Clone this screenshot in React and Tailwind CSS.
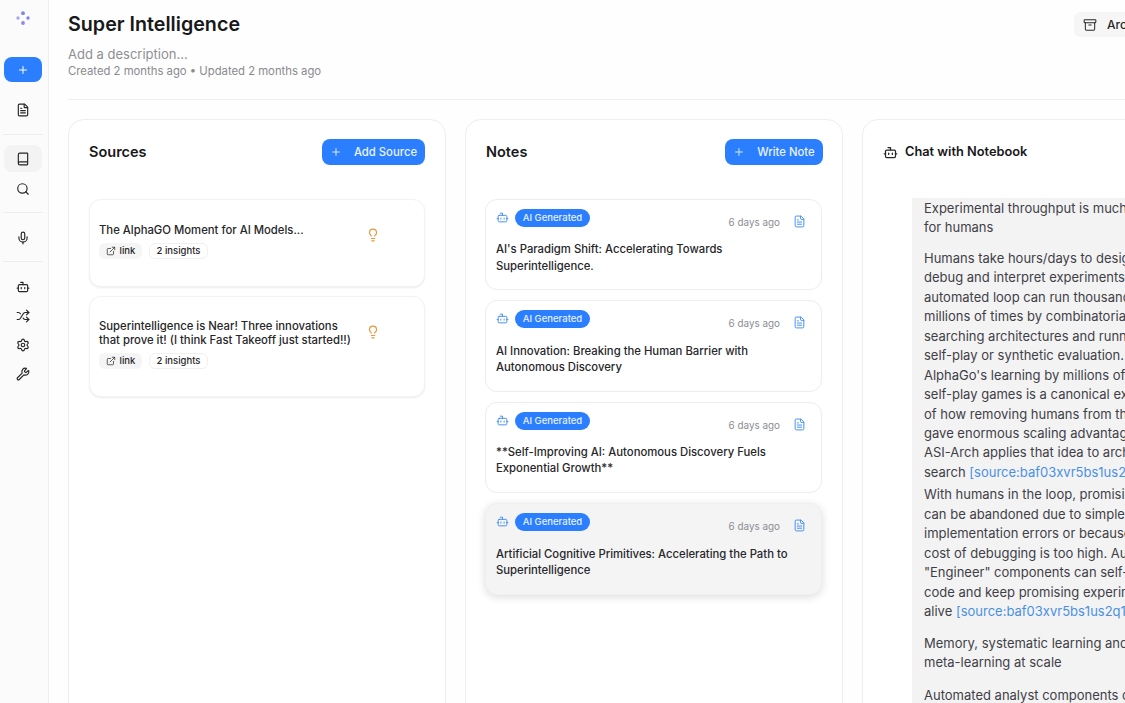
import React from "react";
import { Plus, FileText, Book, Search, Mic, Bot, Shuffle, Settings, Wrench, ExternalLink, Lightbulb, Archive } from "lucide-react";

function Logo() {
  return (
    <svg width="16" height="16" viewBox="0 0 16 16">
      <circle cx="8" cy="3.2" r="1.9" fill="#7c83ee" />
      <circle cx="3" cy="8" r="1.7" fill="#a5a9f4" />
      <circle cx="13" cy="8" r="1.7" fill="#7c83ee" />
      <circle cx="8" cy="13" r="1.9" fill="#8f87ec" />
    </svg>
  );
}

function Divider() {
  return <div className="h-px w-[40px] bg-[#eeeeee]" />;
}

function SideIcon({ icon: Icon, active }) {
  return (
    <div className={`flex w-[38px] items-center justify-center rounded-lg ${active ? "h-[27px] bg-[#f3f3f3]" : "h-[29px]"}`}>
      <Icon size={14} strokeWidth={2} className="text-[#27272a]" />
    </div>
  );
}

function Sidebar() {
  return (
    <aside className="flex h-full w-[49px] shrink-0 flex-col items-center border-r border-[#eeeeee] bg-[#fbfbfb] pr-[2px]">
      <div className="mt-[10px]"><Logo /></div>
      <button className="mt-[31px] flex h-[25px] w-[38px] items-center justify-center rounded-lg bg-[#2b7fff]">
        <Plus size={12} strokeWidth={2} className="text-white" />
      </button>
      <div className="mt-[13px]"><SideIcon icon={FileText} /></div>
      <div className="mt-[10px]"><Divider /></div>
      <div className="mt-[10px]"><SideIcon icon={Book} active /></div>
      <div className="mt-[2px]"><SideIcon icon={Search} /></div>
      <div className="mt-[9px]"><Divider /></div>
      <div className="mt-[10px]"><SideIcon icon={Mic} /></div>
      <div className="mt-[9px]"><Divider /></div>
      <div className="mt-[10px] flex flex-col">
        <SideIcon icon={Bot} />
        <SideIcon icon={Shuffle} />
        <SideIcon icon={Settings} />
        <SideIcon icon={Wrench} />
      </div>
    </aside>
  );
}

function BlueButton({ label, className }) {
  return (
    <button className={`flex h-[26px] ${className} items-center justify-center gap-[12px] rounded-lg bg-[#2b7fff] text-[11.3px] font-medium text-[#eaf2ff]`}>
      <Plus size={12} strokeWidth={1.75} />
      <span>{label}</span>
    </button>
  );
}

function SourceCard({ lines, height, pt, iconTop, mt }) {
  return (
    <div className={`relative flex ${height} w-full flex-col rounded-xl border border-[#f3f3f3] bg-white pl-[9px] ${pt} shadow-[0_1px_2px_rgba(0,0,0,0.08)]`}>
      {lines.map((l) => (
        <div key={l} className="whitespace-nowrap text-[11.3px] leading-[14px] font-medium text-[#27272a]">{l}</div>
      ))}
      <div className={`${mt} flex items-center gap-[7px]`}>
        <span className="flex h-[16px] w-[43px] items-center justify-center gap-[4px] rounded-md bg-[#f5f5f5] text-[9.5px] font-medium text-[#27272a]">
          <ExternalLink size={10} strokeWidth={1.75} />
          link
        </span>
        <span className="flex h-[16px] w-[59px] items-center justify-center rounded-md border border-[#f0f0f0] bg-white text-[9.5px] font-medium text-[#27272a]">2 insights</span>
      </div>
      <Lightbulb size={14} strokeWidth={2} className={`absolute left-[276px] ${iconTop} text-[#e8963a]`} />
    </div>
  );
}

function NoteCard({ title, hover }) {
  return (
    <div className={`h-[91.4px] w-full rounded-xl border px-[10px] pt-[9px] ${hover ? "border-[#efefef] bg-[#f4f4f5] shadow-[0_2px_8px_rgba(0,0,0,0.14)]" : "border-[#ededed] bg-white"}`}>
      <div className="flex items-start">
        <Bot size={13} strokeWidth={1.75} className="mt-[2px] text-[#3f8cf0]" />
        <span className="ml-[6px] flex h-[18px] w-[75px] items-center justify-center rounded-full bg-[#2b7fff] text-[9.5px] font-medium text-[#e6f0ff]">AI Generated</span>
        <span className="mt-[7px] ml-auto text-[9.9px] leading-[12px] text-[#8d8d93]">6 days ago</span>
        <FileText size={13} strokeWidth={1.75} className="mt-[6px] mr-[5px] ml-[13px] text-[#3f8cf0]" />
      </div>
      <div className="mt-[13.4px] text-[11.3px] leading-[16.2px] font-medium text-[#27272a]">
        {title.map((l) => <div key={l} className="whitespace-nowrap">{l}</div>)}
      </div>
    </div>
  );
}

function Panel({ children, className }) {
  return <section className={`h-[640px] shrink-0 rounded-2xl border border-[#eeeeee] bg-white ${className}`}>{children}</section>;
}

const chat = [
  { mt: "mt-[1px]", lines: ["Experimental throughput is much higher than", "for humans"] },
  {
    mt: "mt-[11px]",
    lines: [
      "Humans take hours/days to design,",
      "debug and interpret experiments; an",
      "automated loop can run thousands or",
      "millions of times by combinatorially",
      "searching architectures and running",
      "self-play or synthetic evaluation.",
      "AlphaGo's learning by millions of",
      "self-play games is a canonical example",
      "of how removing humans from the loop",
      "gave enormous scaling advantages;",
      "ASI-Arch applies that idea to architecture",
    ],
    link: ["search ", "[source:baf03xvr5bs1us2q1]"],
  },
  {
    mt: "mt-[3px]",
    lines: [
      "With humans in the loop, promising ideas",
      "can be abandoned due to simple",
      "implementation errors or because the",
      "cost of debugging is too high. Automated",
      "\"Engineer\" components can self-repair",
      "code and keep promising experiments",
    ],
    link: ["alive ", "[source:baf03xvr5bs1us2q1]"],
  },
  { mt: "mt-[12.5px]", lines: ["Memory, systematic learning and", "meta-learning at scale"] },
  { mt: "mt-[13.5px]", lines: ["Automated analyst components can"] },
];

export default function App() {
  return (
    <div className="flex h-[703px] w-[1125px] overflow-hidden bg-white font-['Inter',sans-serif]">
      <Sidebar />
      <main className="min-w-0 flex-1 overflow-hidden bg-[#fefefe] pl-[19px]">
        <header className="relative h-[100px] w-[1100px] border-b border-[#f0f0f0]">
          <h1 className="pt-[10px] text-[19.7px] leading-[28px] font-semibold text-[#18181b]">Super Intelligence</h1>
          <p className="mt-[7px] text-[13px] leading-[18px] text-[#8f8f94]">Add a description...</p>
          <p className="text-[11.3px] leading-[16px] text-[#8a8a8f]">Created 2 months ago • Updated 2 months ago</p>
          <button className="absolute top-[12px] left-[1006px] flex h-[25px] w-[90px] items-center gap-[10px] rounded-md bg-[#f6f6f6] pl-[9px] text-[12px] font-medium text-[#27272a]">
            <Archive size={14} strokeWidth={1.75} />
            Archive
          </button>
        </header>

        <div className="mt-[19px] flex w-[1100px] gap-[19px]">
          <Panel className="w-[378px] px-[20px] pt-[19px]">
            <div className="flex h-[26px] items-center justify-between">
              <h2 className="text-[14.5px] font-semibold text-[#18181b]">Sources</h2>
              <BlueButton label="Add Source" className="w-[103px]" />
            </div>
            <div className="mt-[34px] flex flex-col gap-[9px]">
              <SourceCard lines={["The AlphaGO Moment for AI Models..."]} height="h-[88px]" pt="pt-[23px]" iconTop="top-[28px]" mt="mt-[6px]" />
              <SourceCard
                lines={["Superintelligence is Near! Three innovations", "that prove it! (I think Fast Takeoff just started!!)"]}
                height="h-[101px]"
                pt="pt-[22px]"
                iconTop="top-[28px]"
                mt="mt-[6px]"
              />
            </div>
          </Panel>

          <Panel className="w-[378px] pt-[19px] pr-[20px] pl-[19px]">
            <div className="flex h-[26px] items-center justify-between">
              <h2 className="ml-[1px] text-[14.5px] font-semibold text-[#18181b]">Notes</h2>
              <BlueButton label="Write Note" className="-mr-[1px] w-[98px]" />
            </div>
            <div className="mt-[34px] flex flex-col gap-[10px]">
              <NoteCard title={["AI's Paradigm Shift: Accelerating Towards", "Superintelligence."]} />
              <NoteCard title={["AI Innovation: Breaking the Human Barrier with", "Autonomous Discovery"]} />
              <NoteCard title={["**Self-Improving AI: Autonomous Discovery Fuels", "Exponential Growth**"]} />
              <NoteCard hover title={["Artificial Cognitive Primitives: Accelerating the Path to", "Superintelligence"]} />
            </div>
          </Panel>

          <Panel className="w-[378px] pt-[19px] pl-[20px]">
            <div className="flex h-[26px] items-center gap-[7px]">
              <Bot size={15} strokeWidth={2} className="text-[#27272a]" />
              <h2 className="text-[12.8px] font-semibold text-[#18181b]">Chat with Notebook</h2>
            </div>
            <div className="mt-[33px] ml-[29px] h-[520px] overflow-hidden bg-[#f3f3f4] pl-[12px] text-[13px] leading-[19.45px] text-[#3f3f46]">
              {chat.map((p, i) => (
                <div key={i} className={`${p.mt} whitespace-nowrap`}>
                  {p.lines.map((l) => <div key={l}>{l}</div>)}
                  {p.link && (
                    <div>
                      {p.link[0]}
                      <span className="text-[#4a90e2]">{p.link[1]}</span>
                    </div>
                  )}
                </div>
              ))}
            </div>
          </Panel>
        </div>
      </main>
    </div>
  );
}
